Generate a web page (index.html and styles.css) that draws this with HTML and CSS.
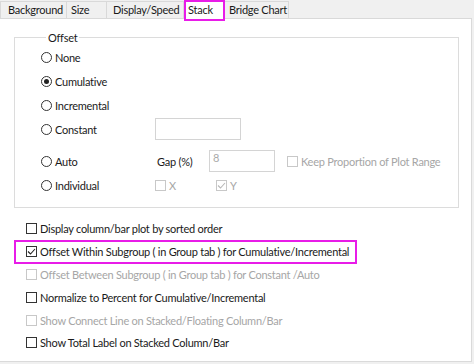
FILE: index.html
```html
<!DOCTYPE html>
<html>
<head>
<meta charset="utf-8">
<link rel="stylesheet" href="styles.css">
</head>
<body>
<div class="window">
  <div class="tabs">
    <div class="tab t-bg">Background</div>
    <div class="tab t-size">Size</div>
    <div class="tab t-disp">Display/Speed</div>
    <div class="tab t-stack active">Stack</div>
    <div class="tab t-bridge">Bridge Chart</div>
  </div>
  <div class="panel">
    <fieldset class="group">
      <legend>Offset</legend>
      <div class="row r-none"><span class="radio"></span><span>None</span></div>
      <div class="row r-cum"><span class="radio on"></span><span>Cumulative</span></div>
      <div class="row r-inc"><span class="radio"></span><span>Incremental</span></div>
      <div class="row r-const">
        <div class="lead"><span class="radio"></span><span>Constant</span></div>
        <div class="input wide"></div>
      </div>
      <div class="row r-auto">
        <div class="lead"><span class="radio"></span><span>Auto</span></div>
        <span class="gaplabel">Gap (%)</span>
        <div class="input gap">8</div>
        <span class="cb dis"></span><span class="dtext">Keep Proportion of Plot Range</span>
      </div>
      <div class="row r-ind">
        <div class="lead"><span class="radio"></span><span>Individual</span></div>
        <span class="cb dis"></span><span class="dtext xl">X</span>
        <span class="cb dis checked"><svg viewBox="0 0 11 11"><path d="M2 5.5 L4.5 8 L9 3" fill="none" stroke="#b8b8b8" stroke-width="1.1"/></svg></span><span class="dtext">Y</span>
      </div>
    </fieldset>
    <div class="checks">
      <div class="crow"><span class="cb"></span><span>Display column/bar plot by sorted order</span></div>
      <div class="crow hl"><span class="cb"><svg viewBox="0 0 11 11"><path d="M2 5.5 L4.5 8 L9 3" fill="none" stroke="#222" stroke-width="1.1"/></svg></span><span>Offset Within Subgroup ( in Group tab ) for Cumulative/Incremental</span></div>
      <div class="crow"><span class="cb dis"></span><span class="dtext">Offset Between Subgroup ( in Group tab ) for Constant /Auto</span></div>
      <div class="crow"><span class="cb"></span><span>Normalize to Percent for Cumulative/Incremental</span></div>
      <div class="crow"><span class="cb dis"></span><span class="dtext">Show Connect Line on Stacked/Floating Column/Bar</span></div>
      <div class="crow"><span class="cb"></span><span>Show Total Label on Stacked Column/Bar</span></div>
    </div>
  </div>
</div>
</body>
</html>
```
FILE: styles.css
```css
html, body {
  margin: 0;
  padding: 0;
  background: #f0f0f0;
}
body {
  width: 474px;
  height: 364px;
  overflow: hidden;
  font-family: "Lato", "Noto Sans", sans-serif;
  font-size: 11px;
  letter-spacing: -0.25px;
  color: #1a1a1a;
}
.window {
  width: 472px;
}
.tabs {
  display: flex;
  height: 18px;
  align-items: flex-start;
  border-bottom: 1px solid #d9d9d9;
}
.tab {
  height: 17px;
  box-sizing: border-box;
  border: 1px solid #d9d9d9;
  border-bottom: none;
  border-left: none;
  background: #f0f0f0;
  line-height: 16px;
  padding: 0 0 0 7px;
  white-space: nowrap;
  margin-top: 1px;
}
.t-bg { width: 67px; border-left: 1px solid #d9d9d9; }
.t-size { width: 40px; padding-left: 4px; }
.t-disp { width: 77px; padding-left: 6px; }
.t-bridge { width: 64px; padding-left: 4px; }
.tab.active {
  width: 41px;
  height: 21px;
  margin-top: 0;
  background: #fff;
  border: 2px solid #e81ce8;
  line-height: 15px;
  padding-left: 2px;
  position: relative;
  z-index: 1;
}
.panel {
  background: #fff;
  height: 343px;
  box-sizing: border-box;
  border-right: 1px solid #dadada;
  border-bottom: 1px solid #dadada;
  padding: 12px 0 0 14px;
}
.group {
  margin: 0;
  width: 445px;
  height: 177px;
  box-sizing: border-box;
  border: 1px solid #dcdcdc;
  padding: 0 0 0 26px;
}
.group legend {
  padding: 0 2px;
  margin-left: 5px;
  line-height: 13px;
}
.row {
  display: flex;
  align-items: center;
  height: 24px;
}
.r-none { margin-top: 1px; }
.r-auto { height: 32px; margin-top: 4px; }
.r-ind { height: 16px; }
.lead {
  display: flex;
  align-items: center;
  width: 114px;
}
.radio {
  width: 11px;
  height: 11px;
  box-sizing: border-box;
  border: 1px solid #333;
  border-radius: 50%;
  margin-right: 3px;
  position: relative;
  flex: none;
}
.radio.on::after {
  content: "";
  position: absolute;
  left: 2px;
  top: 2px;
  width: 5px;
  height: 5px;
  border-radius: 50%;
  background: #222;
}
.input {
  height: 22px;
  box-sizing: border-box;
  border: 1px solid #d4d4d4;
  background: #fff;
}
.input.wide { width: 86px; }
.input.gap {
  width: 66px;
  color: #aaa;
  padding: 0 0 0 3px;
  line-height: 14px;
}
.gaplabel {
  width: 52px;
  margin-left: 2px;
}
.cb {
  width: 11px;
  height: 11px;
  box-sizing: border-box;
  border: 1px solid #333;
  margin-right: 3px;
  flex: none;
  display: inline-block;
  position: relative;
}
.cb svg {
  position: absolute;
  left: -1px;
  top: -1px;
  width: 11px;
  height: 11px;
}
.cb.dis { border-color: #c8c8c8; }
.dtext { color: #a6a6a6; }
.r-auto .cb { margin-left: 12px; }
.r-ind .xl { width: 47px; }
.checks {
  margin-top: 9px;
  margin-left: 12px;
  display: flex;
  flex-direction: column;
}
.crow {
  display: flex;
  align-items: center;
  height: 22.6px;
  white-space: nowrap;
}
.crow.hl {
  margin-left: -12px;
  padding-left: 10px;
  width: 343px;
  height: 24px;
  box-sizing: border-box;
  border: 2px solid #e81ce8;
}
```
